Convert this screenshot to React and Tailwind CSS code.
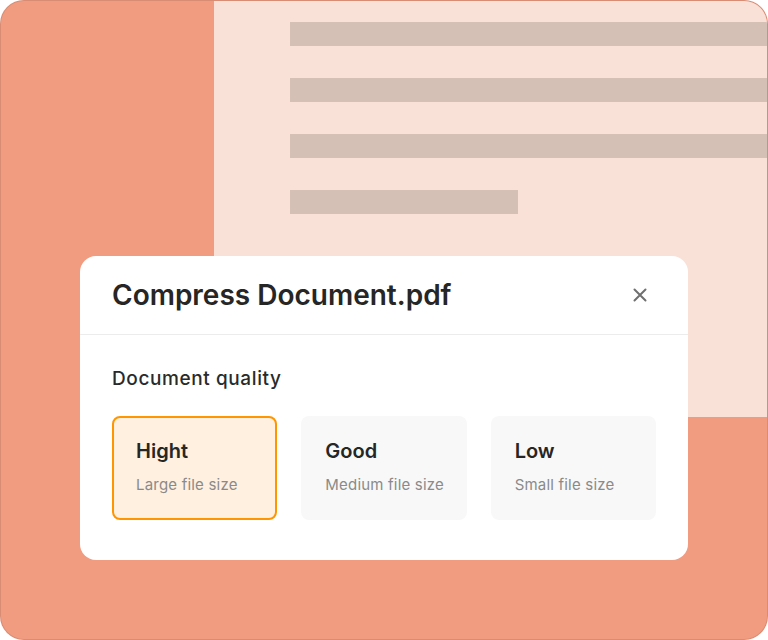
import React from "react";

const options = [
  { title: "Hight", sub: "Large file size", active: true },
  { title: "Good", sub: "Medium file size" },
  { title: "Low", sub: "Small file size" },
];

const App = () => {
  return (
    <div className="w-[768px] h-[640px] bg-white font-['Inter',sans-serif]">
      <div className="relative w-[768px] h-[640px] overflow-hidden rounded-[24px] border-[1.5px] border-black/10 bg-[#f19c80]">
        <div className="flex h-[416px]">
          <div className="w-[213px] shrink-0" />
          <div className="flex-1 bg-[#fae1d8] pl-[76px] pt-[21px] flex flex-col gap-8">
            <div className="h-6 bg-[#d5c0b6]" />
            <div className="h-6 bg-[#d5c0b6]" />
            <div className="h-6 bg-[#d5c0b6]" />
            <div className="h-6 w-[228px] bg-[#d5c0b6]" />
          </div>
        </div>

        <div className="absolute left-[79px] top-[255px] w-[608px] h-[304px] bg-white rounded-2xl">
          <div className="h-[79px] px-8 flex items-center justify-between border-b border-[#ececec]">
            <h1 className="text-[28px] font-semibold text-[#262626]">
              Compress Document.pdf
            </h1>
            <svg width="16" height="16" viewBox="0 0 16 16" className="mr-[8px] text-[#6f6f6f]">
              <path d="M2.5 2.5l11 11M13.5 2.5l-11 11" stroke="currentColor" strokeWidth="2" strokeLinecap="round" />
            </svg>
          </div>
          <div className="px-8 pt-8">
            <p className="text-[19px] leading-6 font-medium text-[#2a2a2a] tracking-[0.6px]">Document quality</p>
            <div className="mt-[25px] grid grid-cols-3 gap-6">
              {options.map((o) => (
                <div
                  key={o.title}
                  className={
                    o.active
                      ? "h-[104px] rounded-lg border-2 border-[#ff9500] bg-[#fff0e0] pl-[22px] pt-[19px]"
                      : "h-[104px] rounded-lg border-2 border-transparent bg-[#f8f8f8] pl-[22px] pt-[19px]"
                  }
                >
                  <p className="text-[20px] leading-7 font-semibold text-[#262626]">{o.title}</p>
                  <p className="mt-[10px] text-[15px] leading-5 text-[#8a8a8a] tracking-[0.2px] whitespace-nowrap">{o.sub}</p>
                </div>
              ))}
            </div>
          </div>
        </div>
      </div>
    </div>
  );
};

export default App;
